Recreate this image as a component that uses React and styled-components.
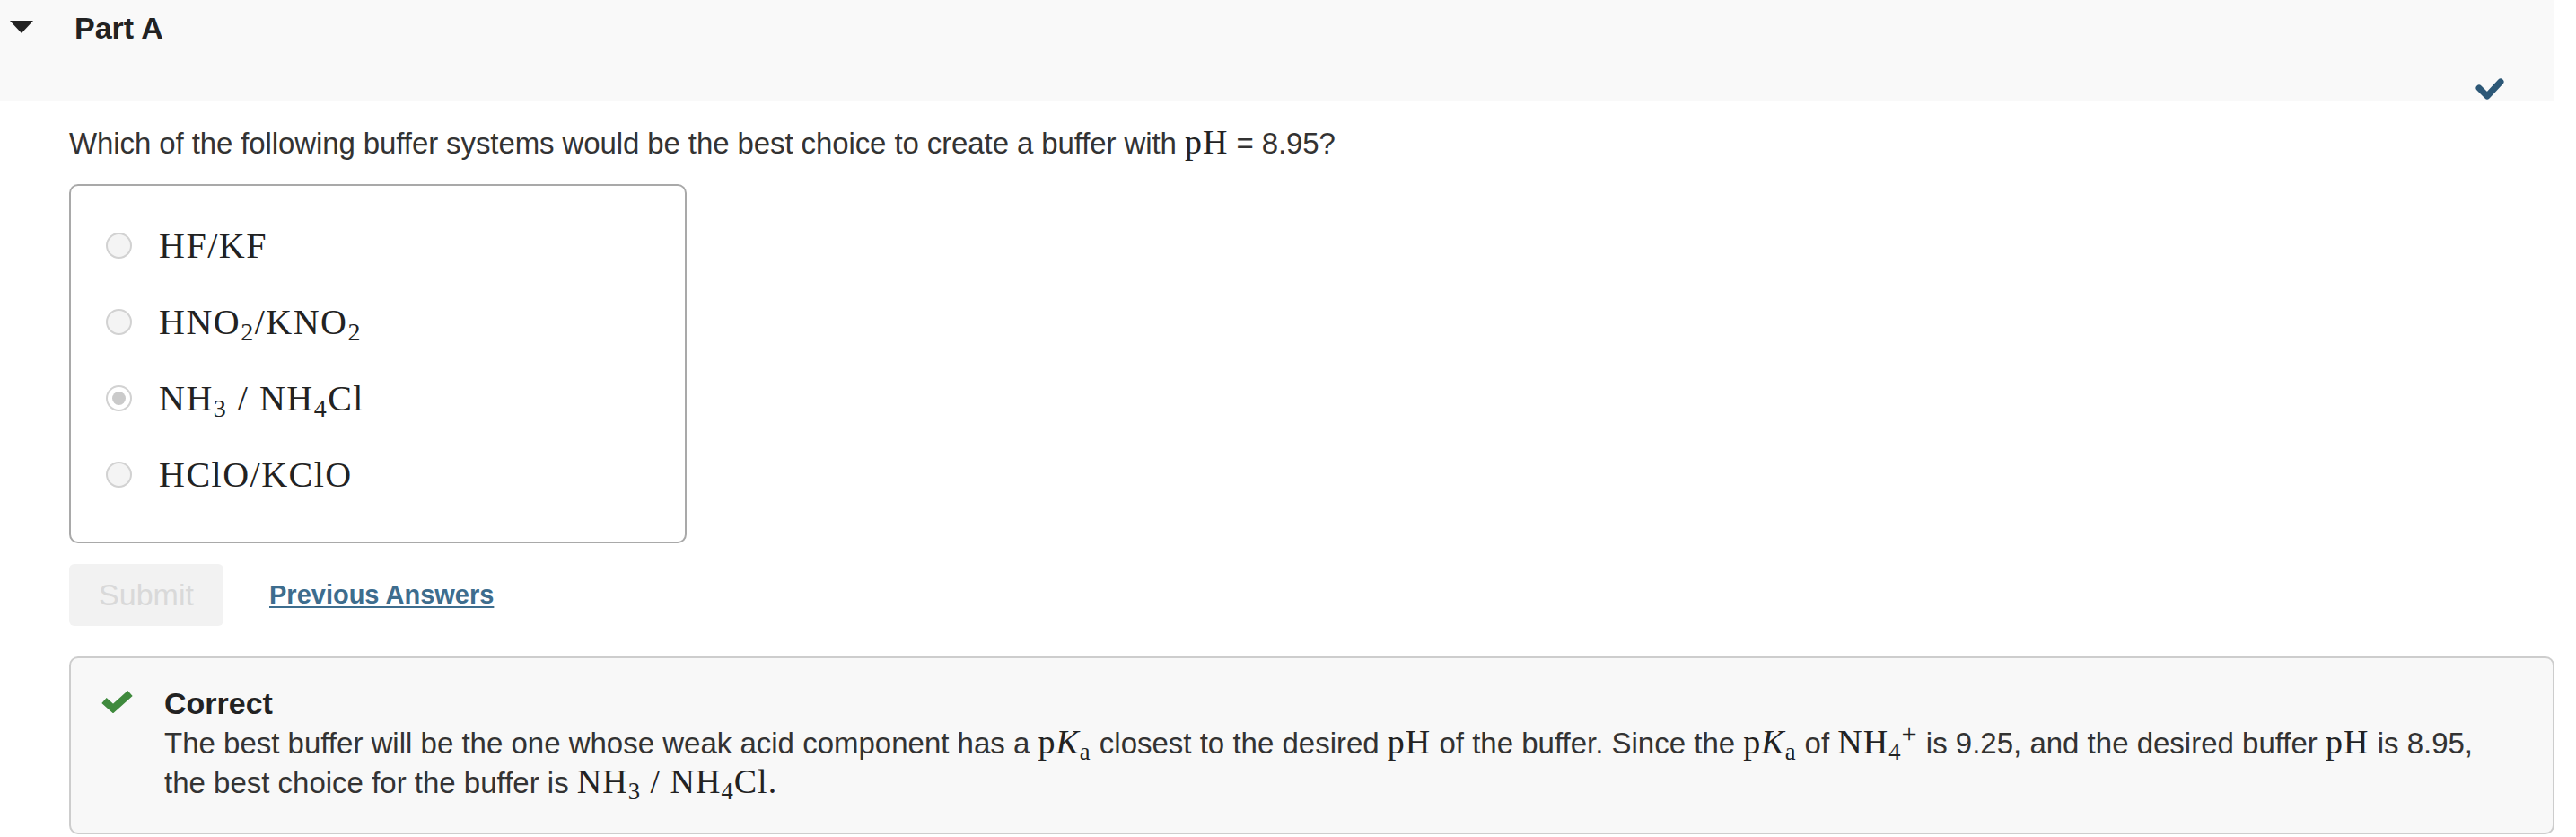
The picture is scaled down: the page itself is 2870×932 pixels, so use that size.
import React from "react"
import styled, { createGlobalStyle } from "styled-components"

const GlobalStyle = createGlobalStyle`
  body {
    margin: 0;
    background: #fff;
  }
`

const Page = styled.div`
  width: 2846px;
  font-family: "Liberation Sans", Arial, sans-serif;
  color: #333;
`

const Header = styled.div`
  display: flex;
  height: 113px;
  background: #f9f9f9;
`

const Toggle = styled.svg`
  margin: 23px 0 0 11px;
  flex-shrink: 0;
`

const Title = styled.h2`
  margin: 0 0 0 46px;
  padding-top: 11px;
  font-size: 34px;
  line-height: 40px;
  font-weight: bold;
  color: #222;
`

const DoneMark = styled.svg`
  margin: 0 56px 1px auto;
  align-self: flex-end;
`

const Body = styled.div`
  padding-left: 77px;
`

const Question = styled.p`
  margin: 25px 0 23px;
  font-size: 33px;
  line-height: 44px;
  letter-spacing: -0.1px;
`

const Math = styled.span`
  font-family: "Liberation Serif", "Times New Roman", serif;
  font-size: ${p => p.$size || 38}px;
  letter-spacing: ${p => p.$spacing ?? 1}px;
  line-height: 1;
  color: #222;
`

const Ital = styled.i`
  font-style: italic;
`

const Sub = styled.sub`
  font-size: 0.7em;
  vertical-align: -0.25em;
  line-height: 0;
`

const Sup = styled.sup`
  font-size: 0.8em;
  vertical-align: 0.38em;
  line-height: 0;
`

const Choices = styled.div`
  box-sizing: border-box;
  width: 688px;
  border: 2px solid #a9a9a9;
  border-radius: 10px;
  padding: 24px 0 32px 39px;
`

const Choice = styled.label`
  display: flex;
  align-items: center;
  gap: 30px;
  height: 85px;
`

const Radio = styled.span`
  box-sizing: border-box;
  display: grid;
  place-items: center;
  width: 29px;
  height: 29px;
  border-radius: 50%;
  border: 2px solid #d2d2d2;
  background: ${p => (p.$checked ? "#fff" : "#f4f4f4")};
`

const Dot = styled.span`
  width: 15px;
  height: 15px;
  border-radius: 50%;
  background: #cacaca;
`

const Actions = styled.div`
  display: flex;
  align-items: center;
  gap: 51px;
  margin-top: 23px;
`

const SubmitButton = styled.button`
  width: 172px;
  height: 69px;
  border: none;
  border-radius: 6px;
  background: #f2f2f2;
  color: #d9d9d9;
  font-family: "Liberation Sans", Arial, sans-serif;
  font-size: 34px;
  padding: 0;
`

const PrevLink = styled.a`
  font-size: 29px;
  font-weight: bold;
  color: #3d6d8e;
  text-decoration: underline;
  text-decoration-thickness: 2px;
  text-underline-offset: 3px;
`

const Feedback = styled.div`
  display: flex;
  gap: 34px;
  margin-top: 34px;
  padding: 28px 30px 33px 34px;
  border: 2px solid #cdcdcd;
  border-radius: 10px;
  background: #f8f8f8;
`

const GreenCheck = styled.svg`
  flex-shrink: 0;
  margin-top: 8px;
`

const FeedbackText = styled.div`
  flex: 1;
`

const FeedbackTitle = styled.div`
  font-size: 34px;
  line-height: 45px;
  font-weight: bold;
  color: #222;
`

const FeedbackBody = styled.div`
  font-size: 33px;
  line-height: 44px;
`

const pKa = (
  <Math>
    p<Ital>K</Ital>
    <Sub>a</Sub>
  </Math>
)

const pH = <Math>pH</Math>

const options = [
  { id: "a", label: <>HF/KF</> },
  {
    id: "b",
    label: (
      <>
        HNO<Sub>2</Sub>/KNO<Sub>2</Sub>
      </>
    ),
  },
  {
    id: "c",
    label: (
      <>
        NH<Sub>3</Sub> / NH<Sub>4</Sub>Cl
      </>
    ),
    checked: true,
  },
  { id: "d", label: <>HClO/KClO</> },
]

export default function App() {
  return (
    <Page>
      <GlobalStyle />
      <Header>
        <Toggle width="26" height="14" viewBox="0 0 26 14">
          <polygon points="0,0 26,0 13,14" fill="#222" />
        </Toggle>
        <Title>Part A</Title>
        <DoneMark width="32" height="26" viewBox="0 0 32 26">
          <polyline
            points="4,12 13,21 28,5"
            fill="none"
            stroke="#2d5877"
            strokeWidth="7"
            strokeLinecap="round"
            strokeLinejoin="round"
          />
        </DoneMark>
      </Header>
      <Body>
        <Question>
          Which of the following buffer systems would be the best choice to create a buffer with {pH} = 8.95?
        </Question>
        <Choices>
          {options.map(o => (
            <Choice key={o.id}>
              <Radio $checked={o.checked}>{o.checked && <Dot />}</Radio>
              <Math $size={40} $spacing={1.5}>
                {o.label}
              </Math>
            </Choice>
          ))}
        </Choices>
        <Actions>
          <SubmitButton disabled>Submit</SubmitButton>
          <PrevLink href="#">Previous Answers</PrevLink>
        </Actions>
        <Feedback>
          <GreenCheck width="36" height="25" viewBox="0 0 36 25">
            <polyline
              points="3,11 13,20 32,3"
              fill="none"
              stroke="#3f8a3d"
              strokeWidth="8"
              strokeLinejoin="miter"
            />
          </GreenCheck>
          <FeedbackText>
            <FeedbackTitle>Correct</FeedbackTitle>
            <FeedbackBody>
              The best buffer will be the one whose weak acid component has a {pKa} closest to the desired {pH} of the
              buffer. Since the {pKa} of{" "}
              <Math>
                NH<Sub>4</Sub>
                <Sup>+</Sup>
              </Math>{" "}
              is 9.25, and the desired buffer {pH} is 8.95,
              <br />
              the best choice for the buffer is{" "}
              <Math>
                NH<Sub>3</Sub> / NH<Sub>4</Sub>Cl.
              </Math>
            </FeedbackBody>
          </FeedbackText>
        </Feedback>
      </Body>
    </Page>
  )
}
